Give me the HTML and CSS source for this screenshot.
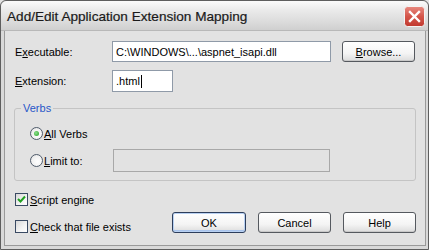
FILE: index.html
```html
<!DOCTYPE html>
<html>
<head>
<meta charset="utf-8">
<link rel="stylesheet" href="styles.css">
</head>
<body>
<div class="window">
  <div class="titlebar">
    <span class="title">Add/Edit Application Extension Mapping</span>
    <span class="close">
      <svg width="21" height="21" viewBox="0 0 21 21">
        <defs>
          <linearGradient id="cg" x1="0" y1="0" x2="0" y2="1">
            <stop offset="0" stop-color="#e88a80"/>
            <stop offset="0.5" stop-color="#d4554a"/>
            <stop offset="1" stop-color="#c0392f"/>
          </linearGradient>
        </defs>
        <rect x="0.5" y="0.5" width="20" height="20" rx="3" fill="url(#cg)" stroke="#f4f4f4"/>
        <path d="M6 6 L15 15 M15 6 L6 15" stroke="#fff" stroke-width="2.4" stroke-linecap="square"/>
      </svg>
    </span>
  </div>
  <div class="client">
    <div class="row row1">
      <label class="lbl">E<u>x</u>ecutable:</label>
      <div class="input wide">C:\WINDOWS\...\aspnet_isapi.dll</div>
      <button class="btn browse"><u>B</u>rowse...</button>
    </div>
    <div class="row row2">
      <label class="lbl"><u>E</u>xtension:</label>
      <div class="input ext">.html<span class="caret"></span></div>
    </div>
    <fieldset class="group">
      <legend>Verbs</legend>
      <div class="opt opt1">
        <span class="radio on"><span class="dot"></span></span>
        <span><u>A</u>ll Verbs</span>
      </div>
      <div class="opt opt2">
        <span class="radio"></span>
        <span class="limit-lbl"><u>L</u>imit to:</span>
        <div class="input disabled"></div>
      </div>
    </fieldset>
    <div class="bottom">
      <div class="checks">
        <div class="chk-row">
          <span class="chk on">
            <svg width="9" height="9" viewBox="0 0 9 9"><path d="M1 4 L3.5 6.5 L8 1.5" fill="none" stroke="#21a121" stroke-width="2"/></svg>
          </span>
          <span><u>S</u>cript engine</span>
        </div>
        <div class="chk-row second">
          <span class="chk"></span>
          <span><u>C</u>heck that file exists</span>
        </div>
      </div>
      <div class="buttons">
        <button class="btn default">OK</button>
        <button class="btn">Cancel</button>
        <button class="btn">Help</button>
      </div>
    </div>
  </div>
</div>
</body>
</html>
```
FILE: styles.css
```css
html, body {
  margin: 0;
  padding: 0;
  width: 429px;
  height: 250px;
  overflow: hidden;
  background: #e2e2e2;
}
.window {
  box-sizing: border-box;
  width: 429px;
  height: 250px;
  border: 1px solid #5e5e5e;
  border-radius: 6px 6px 0 0;
  background: #d9d9d9;
  display: flex;
  flex-direction: column;
  font-family: "Liberation Sans", Arial, sans-serif;
  font-size: 11px;
  color: #000;
}
.titlebar {
  height: 29px;
  flex: none;
  display: flex;
  align-items: center;
  justify-content: space-between;
  padding: 0 3px 0 6px;
  background: linear-gradient(#fbfbfb 0%, #ebebeb 30%, #dcdcdc 70%, #cfcfcf 100%);
  border-radius: 6px 6px 0 0;
  border-bottom: 1px solid #b8b8b8;
}
.title {
  font-size: 13.6px;
  color: #1a1a1a;
  margin-top: 1px;
  -webkit-text-stroke: 0.2px #1a1a1a;
}
.close {
  display: block;
  width: 21px;
  height: 21px;
  margin-top: 1px;
}
.close svg { display: block; }
.client {
  flex: 1;
  margin: 0 2px 3px 3px;
  border-left: 1px solid #9a9a9a;
  border-right: 1px solid #9a9a9a;
  border-bottom: 1px solid #9a9a9a;
  background: #e2e2e2;
  padding: 10px 9px 0 10px;
  display: flex;
  flex-direction: column;
}
.row {
  display: flex;
  align-items: center;
}
.row1 { height: 21px; }
.row2 { height: 22px; margin-top: 8px; }
.lbl {
  width: 97px;
  flex: none;
}
u { text-decoration: underline; text-underline-offset: 1px; }
.input {
  box-sizing: border-box;
  height: 100%;
  background: #fff;
  border: 1px solid #8f9aa8;
  padding: 0 3px;
  display: flex;
  align-items: center;
  white-space: nowrap;
}
.wide { width: 219px; }
.ext { width: 61px; }
.caret {
  display: inline-block;
  width: 1px;
  height: 13px;
  background: #000;
  margin-left: 1px;
}
.btn {
  box-sizing: border-box;
  width: 73px;
  height: 21px;
  font: inherit;
  color: #000;
  border: 1px solid #55595f;
  border-radius: 3px;
  background: linear-gradient(#ffffff 0%, #f4f4f4 60%, #dcdcdc 100%);
  padding: 0;
  box-shadow: inset 0 -1px 0 #c9c9c9;
}
.browse { margin-left: 11px; }
.group {
  margin: 10px 0 0 -1px;
  padding: 0;
  width: 402px;
  height: 79px;
  box-sizing: border-box;
  border: 1px solid #c4c4c4;
  border-radius: 3px;
}
.group legend {
  color: #2856c8;
  padding: 0 2px;
  margin-left: 6px;
  line-height: 13px;
}
.opt {
  display: flex;
  align-items: center;
  margin-left: 15px;
}
.opt1 { margin-top: 12px; height: 13px; }
.opt2 { margin-top: 9px; height: 23px; }
.radio {
  box-sizing: border-box;
  width: 13px;
  height: 13px;
  border-radius: 50%;
  border: 1px solid #4f5b6b;
  background: radial-gradient(circle at 60% 60%, #ffffff 0%, #f0f0f0 60%, #d6d6d6 100%);
  margin-right: 1px;
  display: flex;
  align-items: center;
  justify-content: center;
  flex: none;
}
.dot {
  width: 5px;
  height: 5px;
  border-radius: 50%;
  background: radial-gradient(circle at 40% 40%, #8ee08e, #21a121);
}
.limit-lbl { width: 69px; }
.input.disabled {
  width: 217px;
  background: #e2e2e2;
  border: 1px solid #a8a8a8;
}
.bottom {
  display: flex;
  justify-content: space-between;
  align-items: flex-end;
  margin-top: 12px;
}
.checks {
  display: flex;
  flex-direction: column;
}
.chk-row {
  display: flex;
  align-items: center;
  height: 13px;
}
.chk-row.second { margin-top: 14px; }
.chk {
  box-sizing: border-box;
  width: 13px;
  height: 13px;
  border: 1px solid #3a4a63;
  background: linear-gradient(135deg, #d8d8d8 0%, #f4f4f4 60%, #ffffff 100%);
  margin-right: 2px;
  display: flex;
  align-items: center;
  justify-content: center;
  flex: none;
}
.chk svg { display: block; }
.buttons {
  display: flex;
  gap: 12px;
}
.btn.default {
  width: 74px;
  border-color: #2d3e5c;
  box-shadow: inset 0 0 0 1px #b9d1f2, inset 0 -2px 0 #a9c4ec;
}
```
